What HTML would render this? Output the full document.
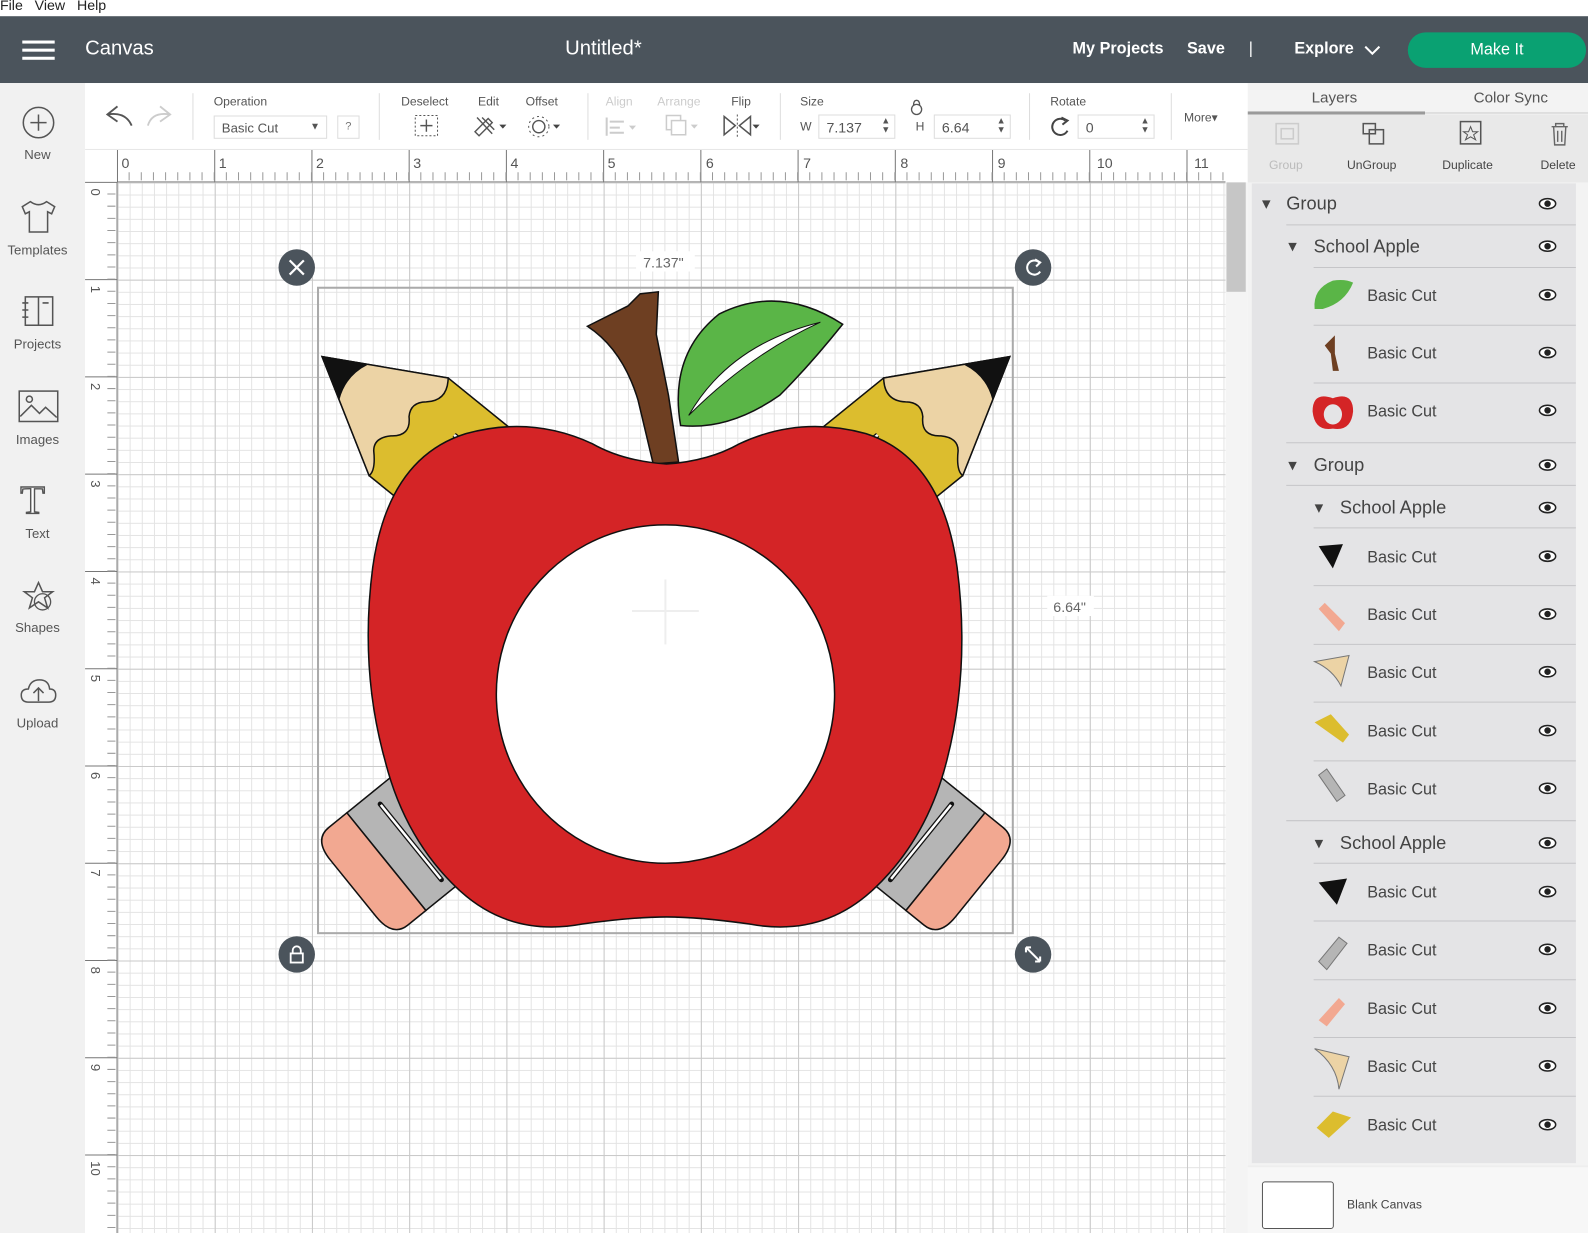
<!DOCTYPE html>
<html><head><meta charset="utf-8"><style>
*{box-sizing:border-box;margin:0;padding:0}
html,body{width:1588px;height:1233px;overflow:hidden;background:#fff;font-family:"Liberation Sans",sans-serif}
#w{position:absolute;left:0;top:0;width:1568px;height:1217px;transform:scale(1.0128,1.0132);transform-origin:0 0;overflow:hidden}
.a{position:absolute}
.t{position:absolute;white-space:nowrap}
.sb{color:#555;font-size:13px;text-align:center;width:74px;left:0}
.tl{font-size:12px;color:#555}
</style></head><body><div id="w">
<div class="t" style="left:0;top:-3px;font-size:14px;color:#222">File&nbsp;&nbsp;&nbsp;View&nbsp;&nbsp;&nbsp;Help</div>
<div class="a" style="left:0;top:16px;width:1568px;height:66px;background:#4b545c"></div>
<div class="a" style="left:22px;top:40px;width:32px;height:3px;background:#fff;box-shadow:0 8px 0 #fff,0 16px 0 #fff"></div>
<div class="t" style="left:84px;top:37px;color:#fff;font-size:20px">Canvas</div>
<div class="t" style="left:558px;top:37px;color:#fff;font-size:20px">Untitled*</div>
<div class="t" style="left:1059px;top:40px;color:#fff;font-size:16px;font-weight:bold">My Projects</div>
<div class="t" style="left:1172px;top:40px;color:#fff;font-size:16px;font-weight:bold">Save</div>
<div class="t" style="left:1233px;top:40px;color:#fff;font-size:16px">|</div>
<div class="t" style="left:1278px;top:40px;color:#fff;font-size:16px;font-weight:bold">Explore</div>
<svg class="a" style="left:1346px;top:44px" width="18" height="12"><path d="M2 2 L9 9 L16 2" stroke="#fff" stroke-width="2" fill="none"/></svg>
<div class="a" style="left:1390px;top:32px;width:176px;height:35px;background:#0aa172;border-radius:18px;color:#fff;font-size:16px;text-align:center;line-height:35px">Make It</div>
<div class="a" style="left:0;top:82px;width:84px;height:1135px;background:#f1f1f1"></div>
<svg class="a" style="left:21px;top:104px" width="34" height="34"><circle cx="17" cy="17" r="15" fill="none" stroke="#555" stroke-width="1.5"/><path d="M17 9v16M9 17h16" stroke="#555" stroke-width="1.5"/></svg>
<div class="t sb" style="top:145px">New</div>
<svg class="a" style="left:18px;top:196px" width="40" height="36"><path d="M12 3 L4 8 L7 15 L11 13 L11 33 L29 33 L29 13 L33 15 L36 8 L28 3 Q20 9 12 3Z" fill="none" stroke="#555" stroke-width="1.5"/></svg>
<div class="t sb" style="top:239px">Templates</div>
<svg class="a" style="left:20px;top:290px" width="36" height="36"><rect x="5" y="3" width="27" height="28" fill="none" stroke="#555" stroke-width="1.5"/><path d="M18 3v28M2 9h6M2 16h6M2 23h6M22 9h6" stroke="#555" stroke-width="1.5"/></svg>
<div class="t sb" style="top:332px">Projects</div>
<svg class="a" style="left:17px;top:383px" width="42" height="36"><rect x="2" y="3" width="38" height="30" fill="none" stroke="#555" stroke-width="1.5"/><path d="M3 28 L14 17 L22 25 L28 19 L39 29" fill="none" stroke="#555" stroke-width="1.5"/><circle cx="12" cy="11" r="3" fill="none" stroke="#555" stroke-width="1.5"/></svg>
<div class="t sb" style="top:426px">Images</div>
<div class="t" style="left:20px;top:470px;font-family:'Liberation Serif',serif;font-size:40px;color:#fff;-webkit-text-stroke:1.4px #555">T</div>
<div class="t sb" style="top:519px">Text</div>
<svg class="a" style="left:20px;top:572px" width="36" height="34"><path d="M18 3 L22 12 L32 12 L24 18 L27 28 L18 22 L9 28 L12 18 L4 12 L14 12Z" fill="none" stroke="#555" stroke-width="1.5"/><circle cx="22" cy="22" r="8" fill="none" stroke="#555" stroke-width="1.3"/></svg>
<div class="t sb" style="top:612px">Shapes</div>
<svg class="a" style="left:19px;top:668px" width="38" height="30"><path d="M9 25 Q2 25 2 18 Q2 12 9 12 Q11 3 20 3 Q29 3 30 12 Q36 12 36 18 Q36 25 29 25Z" fill="none" stroke="#555" stroke-width="1.5"/><path d="M19 24v-12M14 16l5-5 5 5" fill="none" stroke="#555" stroke-width="1.5"/></svg>
<div class="t sb" style="top:706px">Upload</div>
<div class="a" style="left:84px;top:82px;width:1148px;height:66px;background:#fff;border-bottom:1px solid #e5e5e5"></div>
<svg class="a" style="left:102px;top:100px" width="70" height="30"><path d="M14 5 L4 13 L14 20 M4 13 Q22 10 28 24" fill="none" stroke="#555" stroke-width="1.8"/><path d="M56 5 L66 13 L56 20 M66 13 Q48 10 44 24" fill="none" stroke="#ccc" stroke-width="1.8"/></svg>
<div class="a" style="left:190px;top:92px;width:1px;height:46px;background:#ddd"></div>
<div class="t tl" style="left:211px;top:93px">Operation</div>
<div class="a" style="left:211px;top:114px;width:112px;height:23px;border:1px solid #ddd;font-size:13px;color:#555;padding:4px 7px">Basic Cut<span style="position:absolute;right:6px;font-size:10px;top:5px">▼</span></div>
<div class="a" style="left:333px;top:114px;width:22px;height:23px;border:1px solid #ddd;font-size:11px;color:#777;text-align:center;line-height:21px">?</div>
<div class="a" style="left:374px;top:92px;width:1px;height:46px;background:#ddd"></div>
<div class="t tl" style="left:396px;top:93px">Deselect</div>
<svg class="a" style="left:408px;top:112px" width="26" height="24"><rect x="2" y="2" width="22" height="20" fill="none" stroke="#555" stroke-dasharray="2 2"/><path d="M13 6v12M7 12h12" stroke="#555" stroke-width="1.4"/></svg>
<div class="t tl" style="left:472px;top:93px">Edit</div>
<svg class="a" style="left:466px;top:112px" width="36" height="24"><path d="M3 18 L16 5 L20 9 L7 22Z M5 4 L20 20 M10 4 L22 16" fill="none" stroke="#555" stroke-width="1.4"/><path d="M27 11h7l-3.5 4z" fill="#444"/></svg>
<div class="t tl" style="left:519px;top:93px">Offset</div>
<svg class="a" style="left:520px;top:112px" width="36" height="24"><circle cx="12" cy="13" r="6" fill="none" stroke="#555" stroke-width="1.4"/><circle cx="12" cy="13" r="10" fill="none" stroke="#555" stroke-dasharray="2 3"/><path d="M26 11h7l-3.5 4z" fill="#444"/></svg>
<div class="a" style="left:580px;top:92px;width:1px;height:46px;background:#ddd"></div>
<div class="t tl" style="left:598px;top:93px;color:#ccc">Align</div>
<svg class="a" style="left:597px;top:114px" width="36" height="22"><path d="M2 2v18M5 6h14M5 12h10M5 17h14" stroke="#ccc" stroke-width="2"/><path d="M24 10h7l-3.5 4z" fill="#ccc"/></svg>
<div class="t tl" style="left:649px;top:93px;color:#ccc">Arrange</div>
<svg class="a" style="left:656px;top:112px" width="36" height="24"><rect x="2" y="2" width="14" height="14" fill="none" stroke="#ccc" stroke-width="1.5"/><rect x="7" y="7" width="14" height="14" fill="#fff" stroke="#ccc" stroke-width="1.5"/><path d="M26 11h7l-3.5 4z" fill="#ccc"/></svg>
<div class="t tl" style="left:722px;top:93px">Flip</div>
<svg class="a" style="left:713px;top:112px" width="40" height="24"><path d="M2 3 L13 12 L2 21Z M28 3 L17 12 L28 21Z" fill="none" stroke="#555" stroke-width="1.5"/><path d="M15 1v22" stroke="#555" stroke-dasharray="2 2"/><path d="M30 11h7l-3.5 4z" fill="#444"/></svg>
<div class="a" style="left:770px;top:92px;width:1px;height:46px;background:#ddd"></div>
<div class="t tl" style="left:790px;top:93px">Size</div>
<div class="t tl" style="left:790px;top:118px">W</div>
<div class="a" style="left:808px;top:113px;width:76px;height:24px;border:1px solid #ddd;font-size:14px;color:#555;padding:4px 7px">7.137<span style="position:absolute;right:4px;top:1px;font-size:9px;line-height:9px">▲<br>▼</span></div>
<svg class="a" style="left:893px;top:96px" width="24" height="20"><circle cx="12" cy="12" r="5" fill="none" stroke="#555" stroke-width="1.3"/><path d="M9 8 Q9 3 12 3 Q15 3 15 8" fill="none" stroke="#555" stroke-width="1.3"/></svg>
<div class="t tl" style="left:904px;top:118px">H</div>
<div class="a" style="left:922px;top:113px;width:76px;height:24px;border:1px solid #ddd;font-size:14px;color:#555;padding:4px 7px">6.64<span style="position:absolute;right:4px;top:1px;font-size:9px;line-height:9px">▲<br>▼</span></div>
<div class="a" style="left:1016px;top:92px;width:1px;height:46px;background:#ddd"></div>
<div class="t tl" style="left:1037px;top:93px">Rotate</div>
<svg class="a" style="left:1034px;top:113px" width="26" height="24"><path d="M18 6 A8 8 0 1 0 20 16" fill="none" stroke="#444" stroke-width="2"/><path d="M14 3 L20 6 L15 10" fill="none" stroke="#444" stroke-width="2"/></svg>
<div class="a" style="left:1064px;top:113px;width:76px;height:24px;border:1px solid #ddd;font-size:14px;color:#555;padding:4px 7px">0<span style="position:absolute;right:4px;top:1px;font-size:9px;line-height:9px">▲<br>▼</span></div>
<div class="a" style="left:1156px;top:92px;width:1px;height:46px;background:#ddd"></div>
<div class="t tl" style="left:1169px;top:109px">More▾</div>
<div class="a" style="left:84px;top:148px;width:1126px;height:32px;background:#fff"></div>
<div class="a" style="left:84px;top:148px;width:32px;height:1069px;background:#fff"></div>
<div class="a" style="left:116px;top:180px;width:1094px;height:1037px;background-color:#fff;
background-image:linear-gradient(to right,#c9c9c9 1px,transparent 1px),linear-gradient(to bottom,#c9c9c9 1px,transparent 1px),linear-gradient(to right,#e3e3e3 1px,transparent 1px),linear-gradient(to bottom,#e3e3e3 1px,transparent 1px);
background-size:96px 96px,96px 96px,12px 12px,12px 12px"></div>
<svg class="a" style="left:0;top:0" width="1232" height="1217">
<path d="M116 179.5H1210M115.5 180V1217" stroke="#888"/>
<g stroke="#777" stroke-width="1" fill="none">
<path d="M116 148v32M212 148v32M308 148v32M404 148v32M500 148v32M596 148v32M692 148v32M788 148v32M884 148v32M980 148v32M1076 148v32M1172 148v32"/>
<path d="M84 180h32M84 276h32M84 372h32M84 468h32M84 564h32M84 660h32M84 756h32M84 852h32M84 948h32M84 1044h32M84 1140h32"/>
</g>
<path d="M116 174H1210" stroke="#999" stroke-width="8" stroke-dasharray="1 11" stroke-dashoffset="-11"/>
<path d="M110 180V1217" stroke="#999" stroke-width="8" stroke-dasharray="1 11" stroke-dashoffset="-11"/>
<g font-family="Liberation Sans" font-size="14" fill="#555">
<text x="120" y="166">0</text><text x="216" y="166">1</text><text x="312" y="166">2</text><text x="408" y="166">3</text><text x="504" y="166">4</text><text x="600" y="166">5</text><text x="697" y="166">6</text><text x="793" y="166">7</text><text x="889" y="166">8</text><text x="985" y="166">9</text><text x="1083" y="166">10</text><text x="1179" y="166">11</text>
</g>
<g font-family="Liberation Sans" font-size="13" fill="#555">
<text transform="translate(90,186) rotate(90)">0</text><text transform="translate(90,282) rotate(90)">1</text><text transform="translate(90,378) rotate(90)">2</text><text transform="translate(90,474) rotate(90)">3</text><text transform="translate(90,570) rotate(90)">4</text><text transform="translate(90,666) rotate(90)">5</text><text transform="translate(90,762) rotate(90)">6</text><text transform="translate(90,858) rotate(90)">7</text><text transform="translate(90,954) rotate(90)">8</text><text transform="translate(90,1050) rotate(90)">9</text><text transform="translate(90,1146) rotate(90)">10</text>
</g>
</svg>
<div class="a" style="left:1210px;top:180px;width:22px;height:1037px;background:#f4f4f4"></div>
<div class="a" style="left:1211px;top:180px;width:19px;height:108px;background:#c6c6c6"></div>
<svg class="a" style="left:0;top:0" width="1232" height="1217">
<defs>
<g id="pen">
<path d="M0 0 L110 -62 L700 -62 L700 62 L110 62Z" fill="#dcbd2e" stroke="#111" stroke-width="1.5"/>
<path d="M0 0 L110 -62 Q124 -44 108 -30 Q96 -20 104 -8 Q118 6 102 18 Q90 30 98 40 Q112 54 110 62 Z" fill="#ecd3a5" stroke="#111" stroke-width="1.5"/>
<path d="M0 0 L40 -22 Q30 0 40 22Z" fill="#111"/>
<path d="M150 -22h60M150 22h60" stroke="#111" stroke-width="5"/>
<path d="M150 -22h60M150 22h60" stroke="#fff" stroke-width="2.5"/>
<path d="M700 -62 L792 -62 L792 62 L700 62Z" fill="#b5b5b5" stroke="#111" stroke-width="1.5"/>
<path d="M738 -48v96M761 -48v96" stroke="#111" stroke-width="5" stroke-linecap="round"/>
<path d="M738 -47v94M761 -47v94" stroke="#fff" stroke-width="2.5"/>
<path d="M792 -62 L815 -62 Q834 -62 834 -36 L834 36 Q834 62 815 62 L792 62Z" fill="#f2a891" stroke="#111" stroke-width="1.5"/>
</g>
</defs>
<rect x="314" y="284" width="686" height="637" fill="none" stroke="#aaa" stroke-width="2"/>
<g transform="translate(318,352) rotate(39)"><use href="#pen"/></g>
<g transform="translate(997,352) scale(-1,1) rotate(39)"><use href="#pen"/></g>
<circle cx="657" cy="685" r="168" fill="#fff"/>
<path d="M580 322 L620 302 L632 290 L650 288 L648 330 L660 390 L670 456 L645 458 L630 395 Q615 345 580 322Z" fill="#6e3f22" stroke="#111" stroke-width="1.5"/>
<path d="M672 420 Q660 350 710 310 Q770 280 832 320 Q800 360 770 390 Q720 425 672 420Z" fill="#5ab547" stroke="#111" stroke-width="1.5"/>
<path d="M680 410 Q720 340 810 318 Q740 350 680 410Z" fill="#fff" stroke="#111" stroke-width="1"/>
<path fill-rule="evenodd" d="M658 458 Q700 455 730 438 Q790 410 855 428 Q930 452 945 560 Q958 660 935 750 Q915 830 860 880 Q810 925 740 912 Q690 905 658 905 Q625 905 575 912 Q505 925 455 880 Q400 830 380 750 Q355 660 368 560 Q383 452 460 428 Q525 410 585 438 Q615 455 658 458Z M657 518 A167 167 0 1 0 657.1 518Z" fill="#d42426" stroke="#111" stroke-width="1.5"/>
<path d="M624 603h66M657 572v64" stroke="#eee" stroke-width="2"/>
<rect x="628" y="248" width="58" height="20" fill="#fff"/>
<text x="635" y="264" font-family="Liberation Sans" font-size="14" fill="#666">7.137"</text>
<rect x="1034" y="588" width="46" height="20" fill="#fff"/>
<text x="1040" y="604" font-family="Liberation Sans" font-size="14" fill="#666">6.64"</text>
<g fill="#4b545c"><circle cx="293" cy="264" r="18"/><circle cx="1020" cy="264" r="18"/><circle cx="293" cy="942" r="18"/><circle cx="1020" cy="942" r="18"/></g>
<path d="M286 257l14 14M300 257l-14 14" stroke="#fff" stroke-width="2.2"/>
<path d="M1026 259 A7 7 0 1 0 1027 268" fill="none" stroke="#fff" stroke-width="2"/><path d="M1022 256 L1027 259 L1023 263" fill="none" stroke="#fff" stroke-width="2"/>
<rect x="287" y="941" width="12" height="9" fill="none" stroke="#fff" stroke-width="1.8"/><path d="M289 941 v-3 a4 4 0 0 1 8 0 v3" fill="none" stroke="#fff" stroke-width="1.8"/>
<path d="M1013 935 L1027 949 M1013 935 h5 M1013 935 v5 M1027 949 h-5 M1027 949 v-5" stroke="#fff" stroke-width="2" fill="none"/>
</svg>
<div class="a" style="left:1232px;top:82px;width:336px;height:1135px;background:#f3f3f3"></div>
<div class="t" style="left:1295px;top:88px;font-size:15px;color:#555">Layers</div>
<div class="t" style="left:1455px;top:88px;font-size:15px;color:#555">Color Sync</div>
<div class="a" style="left:1232px;top:110px;width:175px;height:3px;background:#9a9a9a"></div>
<div class="a" style="left:1407px;top:111px;width:161px;height:1px;background:#ccc"></div>
<div class="a" style="left:1232px;top:113px;width:336px;height:67px;background:#e9e9e9"></div>
<svg class="a" style="left:1256px;top:118px" width="300" height="30">
<rect x="4" y="4" width="22" height="20" fill="none" stroke="#ccc" stroke-width="1.5"/><rect x="9" y="9" width="12" height="10" fill="none" stroke="#ccc" stroke-width="1.5"/>
<rect x="90" y="4" width="12" height="10" fill="none" stroke="#555" stroke-width="1.5"/><rect x="96" y="10" width="14" height="14" fill="none" stroke="#555" stroke-width="1.5"/>
<rect x="186" y="2" width="20" height="22" fill="none" stroke="#555" stroke-width="1.5"/><path d="M196 7l2 5h5l-4 3 2 5-5-3-5 3 2-5-4-3h5z" fill="none" stroke="#555"/>
<path d="M276 7h16M280 7v-3h8v3M278 7l1 18h10l1-18M282 11v11M286 11v11" fill="none" stroke="#666" stroke-width="1.4"/>
</svg>
<div class="t" style="left:1253px;top:156px;font-size:12px;color:#bbb">Group</div>
<div class="t" style="left:1330px;top:156px;font-size:12px;color:#444">UnGroup</div>
<div class="t" style="left:1424px;top:156px;font-size:12px;color:#444">Duplicate</div>
<div class="t" style="left:1521px;top:156px;font-size:12px;color:#444">Delete</div>
<div class="a" style="left:1236px;top:181px;width:320px;height:967px;background:#e4e4e6"></div>
<div class="a" style="left:1232px;top:1150px;width:336px;height:67px;background:#f7f7f7;border-top:2px solid #eee"></div>
<div class="a" style="left:1246px;top:1166px;width:71px;height:47px;background:#fff;border:1px solid #555;border-radius:3px"></div>
<div class="t" style="left:1330px;top:1182px;font-size:12px;color:#444">Blank Canvas</div>
<svg class="a" style="left:1236px;top:181px" width="320" height="967">
<g stroke="#c5c5c8" stroke-width="1">
<path d="M34 41H320M61 83H320M61 140H320M61 197H320M34 256H320M34 298H320M61 340H320M61 397H320M61 455H320M61 512H320M61 570H320M34 629H320M61 671H320M61 728H320M61 786H320M61 843H320M61 901H320"/>
</g>
<g font-family="Liberation Sans" font-size="16" fill="#444">
<text x="114" y="116">Basic Cut</text><text x="114" y="173">Basic Cut</text><text x="114" y="230">Basic Cut</text>
<text x="114" y="374">Basic Cut</text><text x="114" y="431">Basic Cut</text><text x="114" y="488">Basic Cut</text><text x="114" y="546">Basic Cut</text><text x="114" y="603">Basic Cut</text>
<text x="114" y="705">Basic Cut</text><text x="114" y="762">Basic Cut</text><text x="114" y="820">Basic Cut</text><text x="114" y="877">Basic Cut</text><text x="114" y="935">Basic Cut</text>
</g>
<g font-family="Liberation Sans" font-size="18" fill="#444">
<text x="34" y="26">Group</text><text x="61" y="68">School Apple</text>
<text x="61" y="284">Group</text><text x="87" y="326">School Apple</text><text x="87" y="657">School Apple</text>
</g>
<g font-size="11" fill="#444" font-family="DejaVu Sans"><text x="10" y="24">▼</text><text x="36" y="66">▼</text><text x="36" y="282">▼</text><text x="62" y="324">▼</text><text x="62" y="655">▼</text></g>
<g>
<g transform="translate(283,14)"><ellipse cx="9" cy="6" rx="8" ry="5" fill="#fff" stroke="#222" stroke-width="1.5"/><circle cx="9" cy="6" r="3.2" fill="#222"/></g>
<g transform="translate(283,56)"><ellipse cx="9" cy="6" rx="8" ry="5" fill="#fff" stroke="#222" stroke-width="1.5"/><circle cx="9" cy="6" r="3.2" fill="#222"/></g>
<g transform="translate(283,104)"><ellipse cx="9" cy="6" rx="8" ry="5" fill="#fff" stroke="#222" stroke-width="1.5"/><circle cx="9" cy="6" r="3.2" fill="#222"/></g>
<g transform="translate(283,161)"><ellipse cx="9" cy="6" rx="8" ry="5" fill="#fff" stroke="#222" stroke-width="1.5"/><circle cx="9" cy="6" r="3.2" fill="#222"/></g>
<g transform="translate(283,218)"><ellipse cx="9" cy="6" rx="8" ry="5" fill="#fff" stroke="#222" stroke-width="1.5"/><circle cx="9" cy="6" r="3.2" fill="#222"/></g>
<g transform="translate(283,272)"><ellipse cx="9" cy="6" rx="8" ry="5" fill="#fff" stroke="#222" stroke-width="1.5"/><circle cx="9" cy="6" r="3.2" fill="#222"/></g>
<g transform="translate(283,314)"><ellipse cx="9" cy="6" rx="8" ry="5" fill="#fff" stroke="#222" stroke-width="1.5"/><circle cx="9" cy="6" r="3.2" fill="#222"/></g>
<g transform="translate(283,362)"><ellipse cx="9" cy="6" rx="8" ry="5" fill="#fff" stroke="#222" stroke-width="1.5"/><circle cx="9" cy="6" r="3.2" fill="#222"/></g>
<g transform="translate(283,419)"><ellipse cx="9" cy="6" rx="8" ry="5" fill="#fff" stroke="#222" stroke-width="1.5"/><circle cx="9" cy="6" r="3.2" fill="#222"/></g>
<g transform="translate(283,476)"><ellipse cx="9" cy="6" rx="8" ry="5" fill="#fff" stroke="#222" stroke-width="1.5"/><circle cx="9" cy="6" r="3.2" fill="#222"/></g>
<g transform="translate(283,534)"><ellipse cx="9" cy="6" rx="8" ry="5" fill="#fff" stroke="#222" stroke-width="1.5"/><circle cx="9" cy="6" r="3.2" fill="#222"/></g>
<g transform="translate(283,591)"><ellipse cx="9" cy="6" rx="8" ry="5" fill="#fff" stroke="#222" stroke-width="1.5"/><circle cx="9" cy="6" r="3.2" fill="#222"/></g>
<g transform="translate(283,645)"><ellipse cx="9" cy="6" rx="8" ry="5" fill="#fff" stroke="#222" stroke-width="1.5"/><circle cx="9" cy="6" r="3.2" fill="#222"/></g>
<g transform="translate(283,693)"><ellipse cx="9" cy="6" rx="8" ry="5" fill="#fff" stroke="#222" stroke-width="1.5"/><circle cx="9" cy="6" r="3.2" fill="#222"/></g>
<g transform="translate(283,750)"><ellipse cx="9" cy="6" rx="8" ry="5" fill="#fff" stroke="#222" stroke-width="1.5"/><circle cx="9" cy="6" r="3.2" fill="#222"/></g>
<g transform="translate(283,808)"><ellipse cx="9" cy="6" rx="8" ry="5" fill="#fff" stroke="#222" stroke-width="1.5"/><circle cx="9" cy="6" r="3.2" fill="#222"/></g>
<g transform="translate(283,865)"><ellipse cx="9" cy="6" rx="8" ry="5" fill="#fff" stroke="#222" stroke-width="1.5"/><circle cx="9" cy="6" r="3.2" fill="#222"/></g>
<g transform="translate(283,923)"><ellipse cx="9" cy="6" rx="8" ry="5" fill="#fff" stroke="#222" stroke-width="1.5"/><circle cx="9" cy="6" r="3.2" fill="#222"/></g>
</g>
<path d="M62 124 Q60 104 80 96 Q92 94 100 98 Q92 118 70 124Z" fill="#5ab547"/>
<path d="M72 160 L82 150 L82 168 L86 185 L80 185 L78 168Z" fill="#6e3f22"/>
<path d="M80 212 Q60 205 60 225 Q62 245 80 242 Q98 245 100 225 Q100 205 80 212Z M80 218 A9 10 0 1 0 80.1 218Z" fill="#d42426" fill-rule="evenodd"/>
<path d="M66 358 L90 356 L80 380Z" fill="#111"/>
<path d="M66 420 L72 414 L92 434 L86 442Z" fill="#f2a891"/>
<path d="M62 472 L96 466 L88 496 Q80 480 62 472Z" fill="#ecd3a5" stroke="#777" stroke-width="1"/>
<path d="M62 532 L78 524 L96 544 L90 552Z" fill="#dcbd2e"/>
<path d="M66 584 L74 578 L92 604 L84 610Z" fill="#b5b5b5" stroke="#777"/>
<path d="M66 690 L94 686 L84 712Z" fill="#111"/>
<path d="M66 768 L86 744 L94 750 L74 776Z" fill="#b5b5b5" stroke="#777"/>
<path d="M66 826 L86 804 L92 810 L74 832Z" fill="#f2a891"/>
<path d="M62 854 L96 862 L86 894 Q84 870 62 854Z" fill="#ecd3a5" stroke="#777"/>
<path d="M64 932 L80 916 L98 922 L76 942Z" fill="#dcbd2e"/>
</svg>
</div></body></html>
